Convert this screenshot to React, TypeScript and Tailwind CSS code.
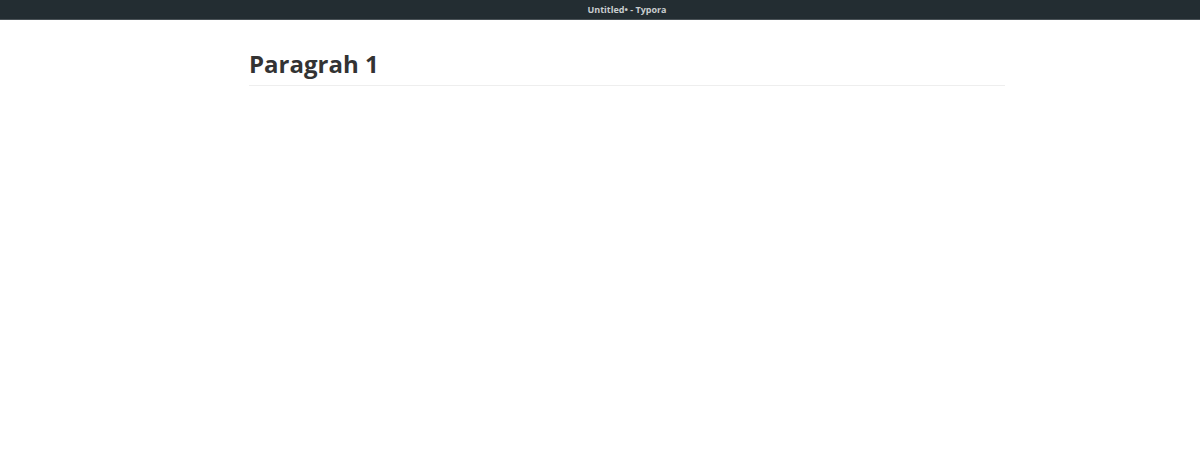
export default function App() {
  return (
    <div className="h-[449px] w-[1200px] overflow-hidden bg-white font-['Open_Sans',sans-serif]">
      {/* Title bar */}
      <header className="flex h-[20px] items-center justify-center border-b border-[#4a5257] bg-[#232d32] pl-[54px]">
        <span className="text-[9px] font-bold leading-none text-[#c8ccce]">Untitled• - Typora</span>
      </header>

      {/* Editor */}
      <main className="ml-[249px] w-[756px] pt-[26px]">
        <h1 className="border-b border-[#eeeeee] pb-[3px] text-[24px] font-bold leading-[36px] text-[#333333]">
          Paragrah 1
        </h1>
      </main>
    </div>
  );
}
